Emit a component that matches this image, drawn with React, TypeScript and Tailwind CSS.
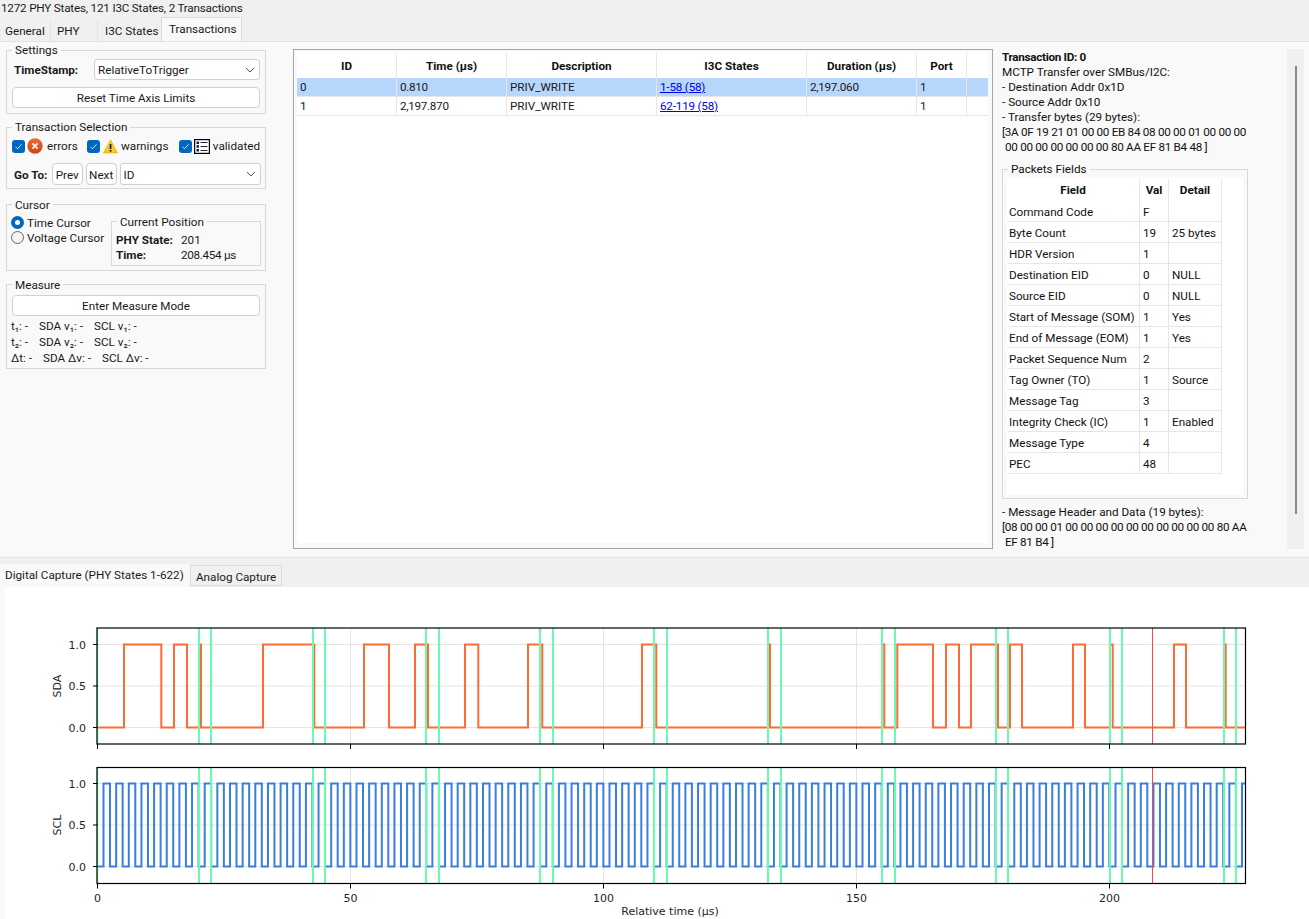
import type { ReactNode } from "react";

const SDA_PULSES = [
  [124, 161.3], [174, 187], [199, 201], [263, 314.3], [364, 389], [415, 428], [465, 478.3],
  [528, 542.3], [642, 656.3], [768, 770], [882, 884.3], [897.3, 933], [946, 959], [971, 998],
  [1010, 1022], [1073, 1085], [1110, 1112.7], [1174, 1186], [1224, 1225.7],
];
const MARKERS = [199, 211, 313, 325, 426, 439, 540, 553, 654, 667, 768, 781, 882, 895, 996, 1008, 1110, 1122, 1224, 1236];
const X_TICKS = [
  { x: 97.5, label: "0" },
  { x: 350.5, label: "50" },
  { x: 603.5, label: "100" },
  { x: 856.5, label: "150" },
  { x: 1109.5, label: "200" },
];

const LEFT = 97.5;
const RIGHT = 1245.5;

function sdaPath(hi: number, lo: number) {
  let d = `M${LEFT} ${lo}`;
  for (const [up, down] of SDA_PULSES) {
    d += ` L${up} ${lo} L${up} ${hi} L${down} ${hi} L${down} ${lo}`;
  }
  return d + ` L${RIGHT} ${lo}`;
}

function sclPath(hi: number, lo: number) {
  let d = `M${LEFT} ${lo}`;
  for (let k = 0; k <= 90; k++) {
    const up = 103.5 + k * 12.65;
    const down = Math.min(up + 6.5, RIGHT);
    d += ` L${up} ${lo} L${up} ${hi} L${down} ${hi}`;
    if (down < RIGHT) d += ` L${down} ${lo}`;
  }
  return d;
}

const Plot = ({ top, bottom, hi, mid, lo, name, line, path, labels }: {
  top: number; bottom: number; hi: number; mid: number; lo: number; name: string; line: string; path: string; labels: boolean;
}) => (
  <g>
    {[hi, mid, lo].map((y) => (
      <line key={y} x1={LEFT} x2={RIGHT} y1={y} y2={y} stroke="#e4e4e4" strokeWidth="1" />
    ))}
    {X_TICKS.map((t) => (
      <line key={t.x} x1={t.x} x2={t.x} y1={top} y2={bottom} stroke="#e4e4e4" strokeWidth="1" />
    ))}
    <path d={path} fill="none" stroke={line} strokeWidth="2" />
    <line x1="97.5" x2="97.5" y1={top} y2={bottom} stroke="#69fcb0" strokeWidth="1.5" />
    {MARKERS.map((x) => (
      <line key={x} x1={x} x2={x} y1={top} y2={bottom} stroke="#69fcb0" strokeWidth="2" />
    ))}
    <line x1="1152.5" x2="1152.5" y1={top} y2={bottom} stroke="#f04d4d" strokeWidth="1" />
    <rect x={LEFT - 0.5} y={top} width={RIGHT - LEFT + 0.5} height={bottom - top} fill="none" stroke="#000" strokeWidth="1.2" />
    {[hi, mid, lo].map((y, i) => (
      <g key={y}>
        <line x1="93" x2={LEFT} y1={y} y2={y} stroke="#000" strokeWidth="1" />
        <text x="86" y={y + 4} textAnchor="end" fontSize="11" fill="#262626" fontFamily="'DejaVu Sans', sans-serif">
          {["1.0", "0.5", "0.0"][i]}
        </text>
      </g>
    ))}
    {X_TICKS.map((t) => (
      <g key={t.x}>
        <line x1={t.x} x2={t.x} y1={bottom} y2={bottom + 5} stroke="#000" strokeWidth="1" />
        {labels && (
          <text x={t.x} y={bottom + 18} textAnchor="middle" fontSize="11" fill="#262626" fontFamily="'DejaVu Sans', sans-serif">
            {t.label}
          </text>
        )}
      </g>
    ))}
    <text
      x={0}
      y={0}
      transform={`translate(61 ${mid}) rotate(-90)`}
      textAnchor="middle"
      fontSize="11"
      fill="#262626"
      fontFamily="'DejaVu Sans', sans-serif"
    >
      {name}
    </text>
  </g>
);

const GroupBox = ({ title, className, children }: { title: string; className: string; children: ReactNode }) => (
  <fieldset className={`border border-[#d8d8d8] min-w-0 ${className}`}>
    <legend className="ml-[1px] px-[3px] h-[16px] leading-[18px]">{title}</legend>
    {children}
  </fieldset>
);

const Button = ({ children, className }: { children: ReactNode; className: string }) => (
  <div className={`bg-white border border-[#d0d0d0] rounded-[4px] flex items-center justify-center pt-[1px] ${className}`}>{children}</div>
);

const Combo = ({ value, className }: { value: string; className: string }) => (
  <div className={`bg-white border border-[#d0d0d0] rounded-[3px] flex items-center justify-between pl-[3px] pr-[3px] ${className}`}>
    <span className="pt-[1px]">{value}</span>
    <svg width="12" height="12" viewBox="0 0 12 12" fill="none" stroke="#555" strokeWidth="1">
      <path d="M2 4l4 4 4-4" />
    </svg>
  </div>
);

const Check = () => (
  <span className="w-[13px] h-[13px] rounded-[3px] bg-[#0067c0] flex items-center justify-center shrink-0">
    <svg width="9" height="9" viewBox="0 0 9 9" fill="none" stroke="#cfe4f7" strokeWidth="1">
      <path d="M1.5 4.8l2 2 4-4.5" />
    </svg>
  </span>
);

const ErrorIcon = () => (
  <svg width="16" height="16" viewBox="0 0 16 16" className="block shrink-0">
    <defs>
      <linearGradient id="errorFill" x1="0" y1="0" x2="0" y2="1">
        <stop offset="0" stopColor="#ec6a35" />
        <stop offset="1" stopColor="#cf4315" />
      </linearGradient>
    </defs>
    <circle cx="8" cy="8" r="7.7" fill="url(#errorFill)" />
    <path d="M5.4 5.4l5.2 5.2M10.6 5.4l-5.2 5.2" stroke="#f8ebe4" strokeWidth="2" />
  </svg>
);

const WarningIcon = () => (
  <svg width="15" height="15" viewBox="0 0 15 15" className="block shrink-0">
    <path d="M7.5 0.8L14.6 14H0.4Z" fill="#f9c821" stroke="#e0a81c" strokeWidth="0.6" />
    <rect x="6.7" y="5" width="1.7" height="5" fill="#1c1c1c" />
    <rect x="6.7" y="11" width="1.7" height="1.7" fill="#1c1c1c" />
  </svg>
);

const ListIcon = () => (
  <svg width="16" height="15" viewBox="0 0 16 15" className="block shrink-0">
    <rect x="0.6" y="0.6" width="14.8" height="13.8" fill="#fff" stroke="#000" strokeWidth="1.2" />
    <rect x="2.5" y="2.5" width="2.5" height="2.5" fill="#14147a" />
    <rect x="2.5" y="6.2" width="2.5" height="2.5" fill="#14147a" />
    <rect x="2.5" y="10" width="2.5" height="2.5" fill="#14147a" />
    <path d="M6.5 3.5h7M6.5 7.5h7M6.5 11.5h7" stroke="#222" strokeWidth="1" />
  </svg>
);

const COLS = [
  { name: "ID", w: "w-[100px]" },
  { name: "Time (µs)", w: "w-[110px]" },
  { name: "Description", w: "w-[150px]" },
  { name: "I3C States", w: "w-[150px]" },
  { name: "Duration (µs)", w: "w-[110px]" },
  { name: "Port", w: "w-[50px]" },
];

const ROWS = [
  { id: "0", time: "0.810", desc: "PRIV_WRITE", states: "1-58 (58)", dur: "2,197.060", port: "1", bg: "bg-[#b7d6fb]" },
  { id: "1", time: "2,197.870", desc: "PRIV_WRITE", states: "62-119 (58)", dur: "", port: "1", bg: "" },
];

const FIELDS = [
  ["Command Code", "F", ""],
  ["Byte Count", "19", "25 bytes"],
  ["HDR Version", "1", ""],
  ["Destination EID", "0", "NULL"],
  ["Source EID", "0", "NULL"],
  ["Start of Message (SOM)", "1", "Yes"],
  ["End of Message (EOM)", "1", "Yes"],
  ["Packet Sequence Num", "2", ""],
  ["Tag Owner (TO)", "1", "Source"],
  ["Message Tag", "3", ""],
  ["Integrity Check (IC)", "1", "Enabled"],
  ["Message Type", "4", ""],
  ["PEC", "48", ""],
];

const TransactionsTable = () => (
  <div className="w-[700px] h-[500px] border border-[#a6a6a6] bg-[#f9f9f9] pt-[2px] pl-[3px] pr-[4px] pb-[5px]">
    <div className="bg-white h-full">
      <div className="flex h-[26px] font-bold text-[#111] pt-[1px]">
        {COLS.map((c) => (
          <div key={c.name} className={`${c.w} shrink-0 border-r border-[#e6e6e6] flex items-center justify-center`}>{c.name}</div>
        ))}
      </div>
      {ROWS.map((r) => (
        <div key={r.id} className={`flex h-[19px] leading-[19px] border-b border-[#e6e6e6] ${r.bg}`}>
          <div className="w-[100px] shrink-0 border-r border-[#e6e6e6] pl-[3px]">{r.id}</div>
          <div className="w-[110px] shrink-0 border-r border-[#e6e6e6] pl-[3px] tracking-[-0.3px]">{r.time}</div>
          <div className="w-[150px] shrink-0 border-r border-[#e6e6e6] pl-[3px]">{r.desc}</div>
          <div className="w-[150px] shrink-0 border-r border-[#e6e6e6] pl-[3px] text-[#0000ee] underline tracking-[-0.2px]">{r.states}</div>
          <div className="w-[110px] shrink-0 border-r border-[#e6e6e6] pl-[3px] tracking-[-0.3px]">{r.dur}</div>
          <div className="w-[50px] shrink-0 border-r border-[#e6e6e6] pl-[3px]">{r.port}</div>
        </div>
      ))}
    </div>
  </div>
);

const Details = () => (
  <div className="w-[246px] h-[500px] overflow-hidden leading-[15px] text-[#111] pt-[1px]">
    <div className="font-bold tracking-[-0.3px]">Transaction ID: 0</div>
    <div>MCTP Transfer over SMBus/I2C:</div>
    <div>- Destination Addr 0x1D</div>
    <div>- Source Addr 0x10</div>
    <div>- Transfer bytes (29 bytes):</div>
    <div className="whitespace-nowrap tracking-[-0.3px]">[3A 0F 19 21 01 00 00 EB 84 08 00 00 01 00 00 00</div>
    <div className="whitespace-nowrap pl-[3px] tracking-[-0.3px]">00 00 00 00 00 00 00 80 AA EF 81 B4 48 ]</div>
    <GroupBox title="Packets Fields" className="mt-[6px] h-[338px] px-[4px] [&>legend]:leading-[16px]">
      <div className="bg-white h-[317px] w-[236px] mt-[1px]">
        <div className="flex h-[23px] font-bold pt-[1px]">
          <div className="w-[133px] border-r border-[#e6e6e6] flex items-center justify-center">Field</div>
          <div className="w-[29px] border-r border-[#e6e6e6] flex items-center justify-center">Val</div>
          <div className="w-[53px] border-r border-[#e6e6e6] flex items-center justify-center">Detail</div>
        </div>
        {FIELDS.map(([field, val, detail]) => (
          <div key={field} className="flex h-[21px] leading-[22px] w-[215px] border-b border-[#e6e6e6]">
            <div className="w-[133px] border-r border-[#e6e6e6] pl-[2px] whitespace-nowrap">{field}</div>
            <div className="w-[29px] border-r border-[#e6e6e6] pl-[3px]">{val}</div>
            <div className="w-[53px] border-r border-[#e6e6e6] pl-[3px] whitespace-nowrap">{detail}</div>
          </div>
        ))}
      </div>
    </GroupBox>
    <div className="mt-[6px]">- Message Header and Data (19 bytes):</div>
    <div className="whitespace-nowrap tracking-[-0.3px]">[08 00 00 01 00 00 00 00 00 00 00 00 00 00 80 AA</div>
    <div className="pl-[3px] tracking-[-0.3px]">EF 81 B4 ]</div>
  </div>
);

const MeasureLine = ({ a, b, c, w1, w2 }: { a: string; b: string; c: string; w1: string; w2: string }) => (
  <div className="flex whitespace-nowrap">
    <span className={w1}>{a}</span>
    <span className={w2}>{b}</span>
    <span>{c}</span>
  </div>
);

const Sidebar = () => (
  <div className="w-[293px] shrink-0 pl-[6px]">
    <GroupBox title="Settings" className="w-[260px] h-[72px] px-[5px] mb-[5px] [&>legend]:ml-0 [&>legend]:leading-[16px]">
      <div className="flex items-center h-[21px] mt-[1px]">
        <span className="w-[80px] ml-[2px] font-bold pt-[1px]">TimeStamp:</span>
        <Combo value="RelativeToTrigger" className="w-[166px] h-[21px]" />
      </div>
      <Button className="w-[248px] h-[21px] mt-[7px]">Reset Time Axis Limits</Button>
    </GroupBox>
    <GroupBox title="Transaction Selection" className="w-[260px] h-[70px] px-[5px] mb-[7px] [&>legend]:ml-0 [&>legend]:leading-[16px]">
      <div className="flex items-center h-[18px] mt-[2px]">
        <Check />
        <span className="ml-[2px]"><ErrorIcon /></span>
        <span className="ml-[4px] w-[29px]">errors</span>
        <span className="ml-[11px]"><Check /></span>
        <span className="ml-[3px]"><WarningIcon /></span>
        <span className="ml-[3px] w-[49px]">warnings</span>
        <span className="ml-[10px]"><Check /></span>
        <span className="ml-[2px]"><ListIcon /></span>
        <span className="ml-[3px]">validated</span>
      </div>
      <div className="flex items-center h-[22px] mt-[8px] -mr-[1px]">
        <span className="ml-[2px] w-[38px] font-bold pt-[1px] whitespace-nowrap">Go To:</span>
        <Button className="w-[31px] h-[22px]">Prev</Button>
        <Button className="w-[31px] h-[22px] ml-[3px]">Next</Button>
        <Combo value="ID" className="w-[142px] h-[22px] ml-[3px]" />
      </div>
    </GroupBox>
    <GroupBox title="Cursor" className="w-[260px] h-[75px] px-[4px] mb-[5px]">
      <div className="flex -mt-[1px]">
        <div className="w-[100px] shrink-0">
          <div className="flex items-center h-[15px] mt-[4px]">
            <span className="w-[13px] h-[13px] rounded-full border-[4px] border-[#0067c0] bg-white" />
            <span className="ml-[3px] whitespace-nowrap">Time Cursor</span>
          </div>
          <div className="flex items-center h-[15px]">
            <span className="w-[13px] h-[13px] rounded-full border border-[#666] bg-[#f4f4f4]" />
            <span className="ml-[3px] whitespace-nowrap">Voltage Cursor</span>
          </div>
        </div>
        <GroupBox title="Current Position" className="w-[150px] h-[53px] mt-[2px] px-[4px]">
          <div className="flex h-[15px] mt-[3px]"><span className="w-[65px] font-bold">PHY State:</span><span>201</span></div>
          <div className="flex h-[15px]"><span className="w-[65px] font-bold">Time:</span><span className="tracking-[-0.3px]">208.454 µs</span></div>
        </GroupBox>
      </div>
    </GroupBox>
    <GroupBox title="Measure" className="w-[260px] h-[93px] px-[5px] [&>legend]:ml-0">
      <Button className="w-[248px] h-[21px] mt-[3px]">Enter Measure Mode</Button>
      <div className="-ml-[1px] mt-[2px] leading-[16px]">
        <MeasureLine a="t₁: -" b="SDA v₁: -" c="SCL v₁: -" w1="w-[28px]" w2="w-[55px]" />
        <MeasureLine a="t₂: -" b="SDA v₂: -" c="SCL v₂: -" w1="w-[28px]" w2="w-[55px]" />
        <MeasureLine a="Δt: -" b="SDA Δv: -" c="SCL Δv: -" w1="w-[32px]" w2="w-[59px]" />
      </div>
    </GroupBox>
  </div>
);

const CapturePlots = () => (
  <svg viewBox="5 587 1304 332" className="w-[1304px] h-[332px] block">
    <Plot top={628} bottom={744} hi={644.5} mid={686} lo={727.5} name="SDA" line="#ff6b35" path={sdaPath(644.5, 727.5)} labels={false} />
    <Plot top={767.5} bottom={883.5} hi={783.5} mid={825} lo={866.5} name="SCL" line="#3a7fdc" path={sclPath(783.5, 866.5)} labels={true} />
    <text x="670" y="915" textAnchor="middle" fontSize="11" fill="#262626" fontFamily="'DejaVu Sans', sans-serif">
      Relative time (µs)
    </text>
  </svg>
);

export default function App() {
  return (
    <div className="w-[1309px] h-[919px] overflow-hidden flex flex-col bg-[#f0f0f0] text-[#1a1a1a] text-[11.7px] leading-[16px] font-['Roboto',sans-serif]">
      <div className="h-[17px] pl-[1px] whitespace-nowrap tracking-[-0.2px]">1272 PHY States, 121 I3C States, 2 Transactions</div>
      <div className="h-[24px] flex items-end">
        <div className="w-[51px] h-[21px] border-r border-[#e3e3e3] pl-[5px] leading-[23px]">General</div>
        <div className="w-[47px] h-[21px] border-r border-[#e3e3e3] pl-[6px] leading-[23px]">PHY</div>
        <div className="w-[63px] h-[21px] pl-[7px] leading-[23px]">I3C States</div>
        <div className="w-[81px] h-[24px] bg-[#f9f9f9] border border-b-0 border-[#dcdcdc] pl-[7px] leading-[22px]">Transactions</div>
      </div>
      <div className="h-[517px] flex bg-[#f9f9f9] border-t border-b border-[#e2e2e2]">
        <Sidebar />
        <div className="pt-[7px] flex">
          <TransactionsTable />
          <div className="ml-[9px]"><Details /></div>
          <div className="ml-[39px] w-[17px] h-[500px] bg-[#f0f0f0] pt-[17px] pl-[8px]">
            <div className="w-[2px] h-[448px] bg-[#8a8a8a]" />
          </div>
        </div>
      </div>
      <div className="h-[29px] flex items-end">
        <div className="w-[191px] h-[23px] bg-[#f9f9f9] border-r border-[#e2e2e2] pl-[5px] leading-[22px] whitespace-nowrap">Digital Capture (PHY States 1-622)</div>
        <div className="w-[91px] h-[21px] border-r border-t border-b border-[#dcdcdc] pl-[5px] leading-[22px] mb-[1px] whitespace-nowrap">Analog Capture</div>
      </div>
      <div className="flex-1 bg-[#f9f9f9] pl-[5px]">
        <div className="bg-white h-full">
          <CapturePlots />
        </div>
      </div>
    </div>
  );
}
